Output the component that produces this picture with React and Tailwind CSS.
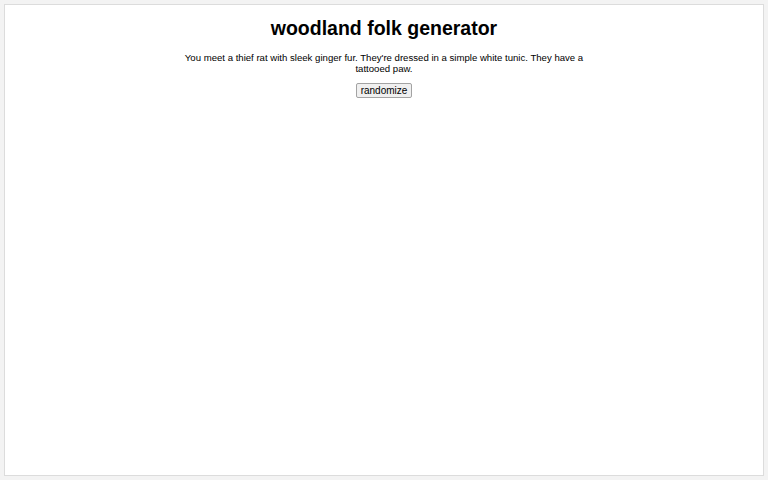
export default function App() {
  return (
    <div className="h-[480px] bg-[#f3f3f3] p-[4px] font-['Liberation_Sans',Arial,sans-serif] text-black">
      <div className="h-[472px] border border-[#dcdcdc] bg-white">
        <div className="flex flex-col items-center pt-[11px]">
          <h1 className="text-[19.5px] font-bold leading-[24px]">woodland folk generator</h1>
          <p className="mt-[12px] w-[404px] text-center text-[9.6px] leading-[11px]">
            You meet a thief rat with sleek ginger fur. They're dressed in a simple white tunic. They have a tattooed paw.
          </p>
          <button className="mt-[9px] h-[15px] rounded-[2px] border border-[#a3a3a3] bg-[#f0f0f0] px-[4px] text-[10px] leading-[13px]">
            randomize
          </button>
        </div>
      </div>
    </div>
  );
}
